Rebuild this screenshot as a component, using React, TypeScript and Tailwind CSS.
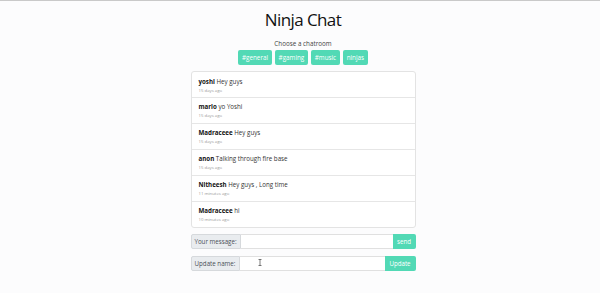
import React from 'react';

const ROOMS = ['#general', '#gaming', '#music', 'ninjas'];

const MESSAGES = [
  { name: 'yoshi', text: 'Hey guys', time: '15 days ago' },
  { name: 'mario', text: 'yo Yoshi', time: '15 days ago' },
  { name: 'Madraceee', text: 'Hey guys', time: '15 days ago' },
  { name: 'anon', text: 'Talking through fire base', time: '15 days ago' },
  { name: 'Nitheesh', text: 'Hey guys , Long time', time: '11 minutes ago' },
  { name: 'Madraceee', text: 'hi', time: '10 minutes ago' },
];

export default function App() {
  return (
    <div
      className="w-[600px] h-[293px] pl-[6px] bg-[#fcfcfd] border-t border-[#c9c9c9] text-[#212529] overflow-hidden"
      style={{ fontFamily: '"Open Sans", "Noto Sans", sans-serif' }}
    >
      <div className="w-[225px] mx-auto flex flex-col items-center">
        {/* Titulo */}
        <h1 className="mt-[8px] text-[17px] leading-[22px] tracking-[-0.6px] text-[#111]">Ninja Chat</h1>
        <p className="mt-[9px] text-[6.3px] leading-[8px] text-[#444]">Choose a chatroom</p>

        {/* Salas */}
        <div className="mt-[2px] flex gap-[2.5px]">
          {ROOMS.map((room) => (
            <button
              key={room}
              className="h-[15px] px-[4px] rounded-[2px] bg-[#52d9b5] text-white text-[6.3px] leading-[15px]"
            >
              {room}
            </button>
          ))}
        </div>

        {/* Lista de mensagens */}
        <ul className="mt-[6px] w-full bg-white border border-[#e3e3e3] rounded-[3px]">
          {MESSAGES.map((msg, i) => (
            <li
              key={i}
              className={`px-[7px] ${i > 0 ? 'h-[26px] pt-[5px] border-t border-[#e6e6e6]' : 'h-[25px] pt-[6px]'}`}
            >
              <div className="text-[6.2px] leading-[8px] text-[#333] whitespace-nowrap">
                <span className="font-bold text-[#111]">{msg.name}</span> {msg.text}
              </div>
              <div className="mt-[0.5px] text-[4.3px] leading-[6px] text-[#999] whitespace-nowrap">{msg.time}</div>
            </li>
          ))}
        </ul>

        {/* Enviar mensagem */}
        <div className="mt-[6px] w-full h-[15px] flex text-[6.2px] whitespace-nowrap">
          <span className="w-[50px] flex items-center justify-center bg-[#e9ecef] border border-[#d6d9dc] rounded-l-[2px] text-[#495057]">
            Your message:
          </span>
          <input className="flex-1 min-w-0 bg-white border-y border-[#e0e0e0]" />
          <button className="w-[23px] bg-[#52d9b5] text-white rounded-r-[2px]">send</button>
        </div>

        {/* Atualizar nome */}
        <div className="mt-[7px] w-full h-[15px] flex text-[6.2px] whitespace-nowrap">
          <span className="w-[49px] flex items-center justify-center bg-[#e9ecef] border border-[#d6d9dc] rounded-l-[2px] text-[#495057]">
            Update name:
          </span>
          <div className="relative flex-1 min-w-0 bg-white border-y border-[#e0e0e0]">
            <svg className="absolute left-[18px] top-[2px]" width="4" height="7" viewBox="0 0 4 7">
              <path d="M0.5 0.5h3M2 0.5v6M0.5 6.5h3" stroke="#444" strokeWidth="0.7" fill="none" />
            </svg>
          </div>
          <button className="w-[31px] bg-[#52d9b5] text-white rounded-r-[2px]">Update</button>
        </div>
      </div>
    </div>
  );
}
